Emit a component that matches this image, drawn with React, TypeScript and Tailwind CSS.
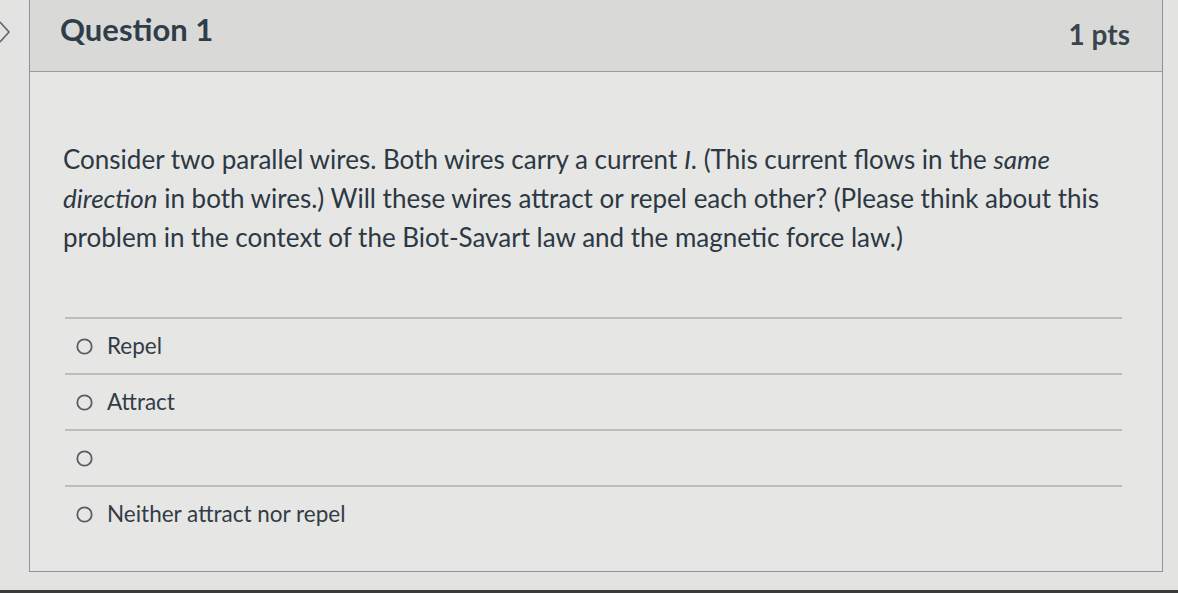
import React from "react";

const options = ["Repel", "Attract", "", "Neither attract nor repel"];

export default function App() {
  return (
    <div
      className="w-[1178px] h-[593px] bg-[#e3e3e2] flex flex-col overflow-hidden text-[#2d3b45]"
      style={{ fontFamily: "Lato, 'Open Sans', sans-serif" }}
    >
      <div className="flex flex-1">
        <div className="w-[29px] flex justify-start items-start pt-[21px]">
          <svg width="14" height="22" viewBox="0 0 14 22" className="-ml-[2px]">
            <path d="M2 1 L11 11 L2 21" fill="none" stroke="#5b6670" strokeWidth="1.6" />
          </svg>
        </div>
        <div className="w-[1134px] h-[572px] border-l border-r border-b border-[#8e929c] bg-[#e6e6e5] flex flex-col">
          <div className="h-[72px] bg-[#d9d9d8] border-b border-[#9c9c9c] flex items-start justify-between pl-[30px] pr-[32px]">
            <div className="text-[31px] font-bold leading-none pt-[14px] text-[#2f3d48]">Question 1</div>
            <div className="text-[28px] font-bold leading-none pt-[20px] text-[#3a444c]">1 pts</div>
          </div>
          <div className="pl-[33px] pr-[30px] pt-[68px]">
            <p className="text-[26px] leading-[39px] text-[#2c3842] whitespace-nowrap">
              Consider two parallel wires. Both wires carry a current <em>I</em>. (This current flows in the <em>same</em>
              <br />
              <em>direction</em> in both wires.) Will these wires attract or repel each other? (Please think about this
              <br />
              problem in the context of the Biot-Savart law and the magnetic force law.)
            </p>
            <div className="mt-[60px] mr-[10px] ml-[2px]">
              {options.map((o, i) => (
                <div key={i} className="border-t-2 border-[#bdbdbd] h-[56px] flex items-center pl-[11px] gap-[14px]">
                  <svg width="17" height="17" viewBox="0 0 17 17">
                    <circle cx="8.5" cy="8.5" r="7.2" fill="none" stroke="#575d63" strokeWidth="1.8" />
                  </svg>
                  <span className="text-[22.5px] text-[#323c46] leading-none">{o}</span>
                </div>
              ))}
            </div>
          </div>
        </div>
      </div>
      <div className="h-[3px] bg-[#3b3b3b]" />
    </div>
  );
}
